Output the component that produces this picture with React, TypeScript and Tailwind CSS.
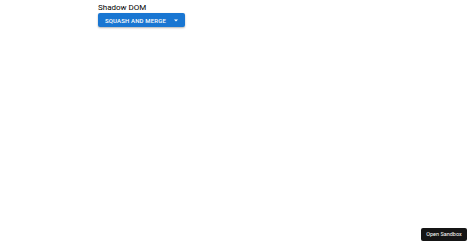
export default function App() {
  return (
    <div className="relative h-[248px] w-[474px] bg-white" style={{ fontFamily: "Roboto, 'Liberation Sans', sans-serif" }}>
      <div className="pl-[98px] pt-[3px]">
        <div className="text-[8px] leading-[9px] text-black">Shadow DOM</div>
        <div className="mt-[1px] flex h-[14px] w-[87px] overflow-hidden rounded-[2px] bg-[#1976d2] text-white shadow-[0_1px_2px_rgba(0,0,0,0.3)]">
          <div className="flex flex-1 items-center pl-[7px] text-[6px] font-medium tracking-[0.15px]">
            SQUASH AND MERGE
          </div>
          <div className="flex w-[18px] items-center justify-center">
            <svg width="4" height="3" viewBox="0 0 4 3" fill="white">
              <path d="M0 0.5h4L2 2.5z" />
            </svg>
          </div>
        </div>
      </div>
      <div className="absolute left-[421px] top-[228px] flex h-[13px] w-[46px] items-center justify-center rounded-[2px] bg-[#151515] text-[5.5px] text-white">
        Open Sandbox
      </div>
    </div>
  );
}
